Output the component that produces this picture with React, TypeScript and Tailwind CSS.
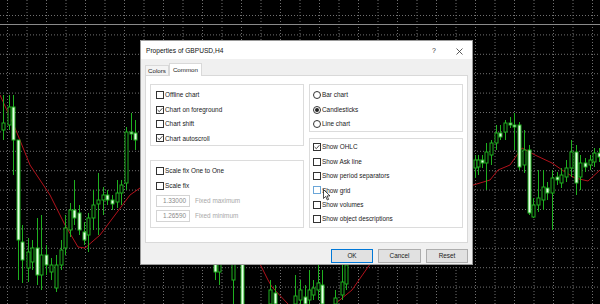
import React from "react";

type Candle = [number, number, number, number, number, number];

// [x, wickTop, wickBottom, bodyTop, bodyBottom, bear]
const candles: Candle[] = [
  [3, 95, 140, 123, 130, 0],
  [9, 95, 130, 107, 125, 0],
  [13, 95, 175, 107, 140, 1],
  [18, 140, 280, 140, 240, 1],
  [22, 225, 283, 242, 260, 1],
  [28, 238, 282, 252, 268, 0],
  [32, 240, 270, 248, 262, 0],
  [37, 218, 285, 248, 275, 1],
  [41, 215, 290, 255, 275, 0],
  [46, 245, 275, 255, 265, 1],
  [51, 258, 280, 265, 272, 0],
  [56, 255, 292, 265, 288, 0],
  [61, 240, 270, 250, 265, 0],
  [65, 215, 255, 228, 248, 0],
  [70, 203, 237, 210, 230, 0],
  [74, 180, 225, 210, 218, 1],
  [79, 205, 235, 213, 230, 1],
  [84, 222, 245, 232, 240, 1],
  [88, 213, 252, 218, 235, 0],
  [93, 190, 230, 205, 218, 0],
  [98, 173, 235, 200, 204, 0],
  [103, 187, 215, 195, 200, 0],
  [107, 190, 205, 195, 200, 1],
  [112, 195, 210, 200, 204, 1],
  [117, 180, 208, 193, 202, 0],
  [121, 180, 205, 185, 193, 0],
  [126, 127, 190, 132, 183, 0],
  [131, 113, 140, 132, 134, 1],
  [135, 120, 150, 133, 140, 1],
  [215, 250, 280, 258, 272, 1],
  [219, 250, 285, 262, 272, 0],
  [233, 250, 304, 262, 280, 0],
  [242, 250, 310, 252, 310, 1],
  [270, 280, 310, 290, 304, 0],
  [275, 285, 310, 293, 304, 1],
  [295, 275, 310, 296, 304, 0],
  [300, 280, 310, 290, 300, 0],
  [305, 285, 310, 297, 304, 1],
  [309, 270, 310, 290, 300, 0],
  [313, 280, 300, 288, 295, 0],
  [318, 250, 300, 283, 290, 0],
  [322, 270, 310, 285, 304, 1],
  [335, 290, 310, 298, 304, 0],
  [342, 250, 300, 282, 295, 0],
  [346, 250, 290, 265, 284, 0],
  [475, 155, 178, 160, 168, 0],
  [478, 155, 175, 160, 167, 0],
  [482, 155, 168, 160, 163, 1],
  [486, 143, 190, 152, 163, 0],
  [491, 140, 165, 143, 155, 0],
  [496, 125, 150, 133, 143, 0],
  [500, 125, 140, 133, 137, 1],
  [505, 120, 140, 123, 132, 0],
  [510, 117, 128, 123, 125, 1],
  [514, 113, 150, 125, 127, 1],
  [519, 122, 170, 125, 167, 1],
  [524, 130, 173, 150, 165, 0],
  [529, 145, 215, 150, 213, 1],
  [533, 198, 218, 205, 217, 0],
  [538, 170, 212, 198, 205, 0],
  [543, 170, 210, 187, 200, 0],
  [547, 182, 200, 188, 193, 1],
  [552, 170, 230, 178, 193, 0],
  [557, 172, 185, 177, 180, 1],
  [561, 168, 188, 175, 183, 0],
  [566, 160, 182, 168, 177, 0],
  [571, 140, 177, 152, 168, 0],
  [576, 145, 195, 152, 183, 1],
  [580, 155, 190, 163, 177, 0],
  [585, 158, 172, 163, 167, 1],
  [590, 155, 170, 160, 165, 0],
  [594, 148, 167, 153, 162, 0],
  [599, 148, 162, 153, 157, 1],
];

function Chart() {
  const vLines = Array.from({ length: 31 }, (_, i) => 7.5 + i * 19.5);
  const hLines = Array.from({ length: 16 }, (_, i) => 15.5 + i * 19.4);
  return (
    <svg className="absolute inset-0" width="600" height="304" viewBox="0 0 600 304">
      {vLines.map((x) => (
        <line key={"v" + x} x1={x} y1={0} x2={x} y2={304} stroke="#707070" strokeWidth="1" strokeDasharray="1 2" />
      ))}
      {hLines.map((y) => (
        <line key={"h" + y} x1={0} y1={y} x2={600} y2={y} stroke="#707070" strokeWidth="1" strokeDasharray="1 2" />
      ))}
      <line x1={0} y1={24.5} x2={600} y2={24.5} stroke="#8a8a8a" strokeWidth="1" />
      <polyline
        points="0,95 15,128 30,165 50,195 65,225 78,247 85,248 100,235 115,215 130,195 140,188"
        fill="none"
        stroke="#b3121c"
        strokeWidth="1"
      />
      <polyline points="255,255 261,266 268,280 272,287 288,304" fill="none" stroke="#b3121c" strokeWidth="1" />
      <polyline points="335,304 352,290 368,267 380,250" fill="none" stroke="#b3121c" strokeWidth="1" />
      <polyline
        points="470,186 490,180 498,170 510,165 517,155 522,148 535,155 552,163 565,172 575,178 588,181 600,170"
        fill="none"
        stroke="#b3121c"
        strokeWidth="1"
      />
      {candles.map(([x, wt, wb, bt, bb, bear]) => (
        <g key={x}>
          <line x1={x + 0.5} y1={wt} x2={x + 0.5} y2={wb} stroke="#1fb01f" strokeWidth="1" />
          <rect
            x={x - 1}
            y={bt}
            width={3}
            height={Math.max(bb - bt, 1)}
            fill={bear ? "#e8ffe8" : "#000"}
            stroke="#1fb01f"
            strokeWidth="1"
          />
        </g>
      ))}
    </svg>
  );
}

function Check({ checked = false, hover = false }: { checked?: boolean; hover?: boolean }) {
  return (
    <span
      className={
        hover
          ? "w-[8px] h-[8px] shrink-0 border border-[#6aa6d8] bg-white flex items-center justify-center"
          : "w-[8px] h-[8px] shrink-0 border border-[#333] bg-white flex items-center justify-center"
      }
    >
      {checked && (
        <svg width="6" height="6" viewBox="0 0 6 6">
          <path d="M0.6 3 L2.3 4.7 L5.4 1.2" fill="none" stroke="#333" strokeWidth="0.9" />
        </svg>
      )}
    </span>
  );
}

function Radio({ on = false }: { on?: boolean }) {
  return (
    <span className="w-[8px] h-[8px] shrink-0 rounded-full border border-[#333] bg-white flex items-center justify-center">
      {on && <span className="w-[4px] h-[4px] rounded-full bg-[#222]" />}
    </span>
  );
}

function Row({ children, label }: { children: React.ReactNode; label: string }) {
  return (
    <div className="flex items-center gap-[1px] h-[14.4px]">
      {children}
      <span className="whitespace-nowrap">{label}</span>
    </div>
  );
}

function FixedInput({ value, label }: { value: string; label: string }) {
  return (
    <div className="flex items-center gap-[5px] h-[12px]">
      <div className="w-[34px] h-[12px] border border-[#d4d4d4] bg-white text-right pr-[3px] leading-[10px] text-[#8a8a8a]">
        {value}
      </div>
      <span className="text-[#a8a8a8] whitespace-nowrap">{label}</span>
    </div>
  );
}

export default function App() {
  return (
    <div className="relative w-[600px] h-[304px] bg-black overflow-hidden font-['Liberation_Sans',Arial,sans-serif] text-[6.4px] text-[#1a1a1a]">
      <Chart />

      <div className="absolute left-[140px] top-[40px] w-[333px] h-[225px] bg-[#f0f0f0] border border-[#9a9a9a] flex flex-col">
        <div className="h-[18px] bg-white flex items-center pl-[5px] pr-[9px] pt-[2px]">
          <span className="text-[6.6px] text-[#111]">Properties of GBPUSD,H4</span>
          <span className="ml-auto mr-[20px] text-[7px] text-[#333]">?</span>
          <svg width="7" height="7" viewBox="0 0 7 7">
            <path d="M0.5 0.5 L6.5 6.5 M6.5 0.5 L0.5 6.5" stroke="#333" strokeWidth="0.8" />
          </svg>
        </div>

        <div className="flex items-end h-[16px] pl-[4px]">
          <div className="h-[10px] px-[2px] border border-b-0 border-[#d9d9d9] bg-[#f4f4f4] flex items-center text-[6.2px]">
            Colors
          </div>
          <div className="h-[13px] px-[3px] border border-b-0 border-[#d9d9d9] bg-white flex items-center text-[6.2px] -mb-[1px] relative">
            Common
          </div>
        </div>

        <div className="mx-[4px] h-[168px] bg-white border border-[#d9d9d9] pl-[4px] pt-[8px] flex gap-[5px]">
          <div className="w-[154px] flex flex-col gap-[14px]">
            <div className="h-[62px] border border-[#dcdcdc] pl-[5px] pt-[3px]">
              <Row label="Offline chart">
                <Check />
              </Row>
              <Row label="Chart on foreground">
                <Check checked />
              </Row>
              <Row label="Chart shift">
                <Check />
              </Row>
              <Row label="Chart autoscroll">
                <Check checked />
              </Row>
            </div>
            <div className="h-[68px] border border-[#dcdcdc] pl-[5px] pt-[3px]">
              <Row label="Scale fix One to One">
                <Check />
              </Row>
              <Row label="Scale fix">
                <Check />
              </Row>
              <div className="flex flex-col gap-[3px] mt-[2px]">
                <FixedInput value="1.33000" label="Fixed maximum" />
                <FixedInput value="1.26590" label="Fixed minimum" />
              </div>
            </div>
          </div>

          <div className="w-[154px] flex flex-col gap-[6px]">
            <div className="h-[48px] border border-[#dcdcdc] pl-[3px] pt-[3px]">
              <Row label="Bar chart">
                <Radio />
              </Row>
              <Row label="Candlesticks">
                <Radio on />
              </Row>
              <Row label="Line chart">
                <Radio />
              </Row>
            </div>
            <div className="h-[90px] border border-[#dcdcdc] pl-[3px] pt-[1px]">
              <Row label="Show OHLC">
                <Check checked />
              </Row>
              <Row label="Show Ask line">
                <Check />
              </Row>
              <Row label="Show period separators">
                <Check />
              </Row>
              <Row label="Show grid">
                <Check hover />
              </Row>
              <Row label="Show volumes">
                <Check />
              </Row>
              <Row label="Show object descriptions">
                <Check />
              </Row>
            </div>
          </div>
        </div>

        <div className="flex justify-end gap-[5px] pr-[4px] mt-[6px]">
          <button className="w-[42px] h-[14px] bg-[#e1e1e1] border border-[#0078d7] text-[6.4px] text-[#1a1a1a]">
            OK
          </button>
          <button className="w-[43px] h-[14px] bg-[#e1e1e1] border border-[#adadad] text-[6.4px] text-[#1a1a1a]">
            Cancel
          </button>
          <button className="w-[42px] h-[14px] bg-[#e1e1e1] border border-[#adadad] text-[6.4px] text-[#1a1a1a]">
            Reset
          </button>
        </div>

        <svg className="absolute left-[182px] top-[148px]" width="8" height="12" viewBox="0 0 8 12">
          <path d="M0.5 0.5 L0.5 9.5 L2.7 7.4 L4.3 11 L5.6 10.4 L4.1 6.9 L7 6.9 Z" fill="#fff" stroke="#000" strokeWidth="0.7" />
        </svg>
      </div>
    </div>
  );
}
